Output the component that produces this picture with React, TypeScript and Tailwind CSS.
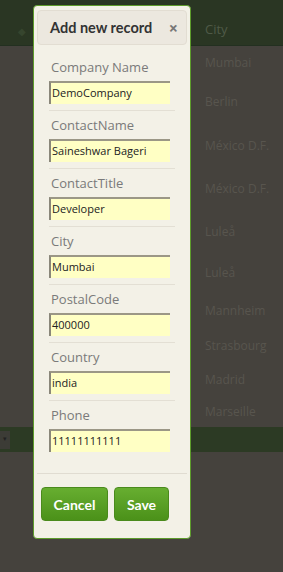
import React from "react";

const cities = [
  { name: "Mumbai", h: 33 },
  { name: "Berlin", h: 45 },
  { name: "México D.F.", h: 43 },
  { name: "México D.F.", h: 44 },
  { name: "Luleå", h: 42 },
  { name: "Luleå", h: 40 },
  { name: "Mannheim", h: 36 },
  { name: "Strasbourg", h: 34 },
  { name: "Madrid", h: 34 },
  { name: "Marseille", h: 30 },
];

const fields = [
  { label: "Company Name", value: "DemoCompany" },
  { label: "ContactName", value: "Saineshwar Bageri" },
  { label: "ContactTitle", value: "Developer" },
  { label: "City", value: "Mumbai" },
  { label: "PostalCode", value: "400000" },
  { label: "Country", value: "india" },
  { label: "Phone", value: "11111111111" },
];

export default function App() {
  return (
    <div
      className="relative w-[283px] h-[572px] overflow-hidden bg-[#45423d]"
      style={{ fontFamily: '"Open Sans", "Noto Sans", sans-serif' }}
    >
      {/* grid behind the overlay */}
      <div className="flex flex-col">
        <div className="h-[46px] bg-[#2a3623] border-b border-[#233020] flex items-end pb-[6px]">
          <span className="ml-[18px] text-[10px] text-[#36452e]">◆</span>
          <span className="ml-[179px] text-[13px] text-[#4f5a47]">City</span>
        </div>
        <div className="flex flex-col pl-[205px]">
          {cities.map((c, i) => (
            <div key={i} className="flex items-center text-[12px] text-[#58554e]" style={{ height: c.h }}>
              {c.name}
            </div>
          ))}
        </div>
        <div className="h-[25px] bg-[#2c3a24] flex items-center">
          <div className="w-[10px] h-[18px] bg-[#3c3c36] flex items-center justify-center text-[7px] text-[#222]">▾</div>
        </div>
      </div>

      {/* modal dialog */}
      <div className="absolute left-[33px] top-[5px] w-[158px] h-[534px] bg-[#f3f1e7] border border-[#5d9b2b] rounded-[4px] p-[3px] flex flex-col">
        <div className="shrink-0 mt-[1px] h-[35px] bg-[#ece8df] border border-[#e2ddd2] rounded-[4px] flex items-center justify-between pl-[12px] pr-[8px]">
          <span className="text-[14.5px] font-bold text-[#333]" style={{ fontFamily: "Lato, sans-serif" }}>
            Add new record
          </span>
          <span className="text-[16px] font-bold text-[#777] leading-none">×</span>
        </div>
        <div className="shrink-0 flex flex-col px-[12px] pt-[8px]">
          {fields.map((f, i) => (
            <div key={f.label} className={`flex flex-col pt-[4px] pb-[6px] ${i < fields.length - 1 ? "border-b border-[#e3dfd4]" : ""}`}>
              <label className="text-[13px] leading-[20px] text-[#7a7a7a] pl-[2px]">{f.label}</label>
              <div className="mt-[4px] w-[121px] h-[23px] bg-[#ffffc4] border-t-2 border-l-2 border-t-[#9b9786] border-l-[#8a877a] flex items-center pl-[1px] text-[11px] text-[#222]">
                {f.value}
              </div>
            </div>
          ))}
        </div>
        <div className="shrink-0 mt-[15px] border-t border-[#e0dcd1] pt-[13px] px-[4px] flex gap-[6px]">
          <button
            className="w-[67px] h-[34px] rounded-[4px] border border-[#4a8a1c] bg-gradient-to-b from-[#67ae30] to-[#4b9119] text-white font-bold text-[14px]"
            style={{ fontFamily: "Lato, sans-serif" }}
          >
            Cancel
          </button>
          <button
            className="w-[55px] h-[34px] rounded-[4px] border border-[#4a8a1c] bg-gradient-to-b from-[#67ae30] to-[#4b9119] text-white font-bold text-[14px]"
            style={{ fontFamily: "Lato, sans-serif" }}
          >
            Save
          </button>
        </div>
      </div>
    </div>
  );
}
